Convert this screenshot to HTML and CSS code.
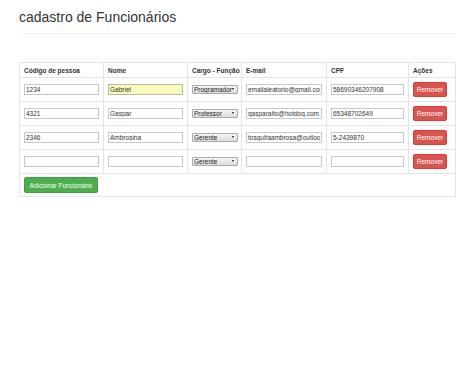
FILE: index.html
```html
<!DOCTYPE html>
<html lang="pt">

<head>
    <meta charset="UTF-8">
    <meta name="viewport" content="width=device-width, initial-scale=1.0">
    <title>cadastro de Funcionários</title>
    <link rel="stylesheet" href="styles.css">
</head>

<body>
    <div class="page">
        <h1 class="title">cadastro de Funcionários</h1>
        <hr class="rule">

        <table class="staff">
            <colgroup>
                <col class="c-code">
                <col class="c-name">
                <col class="c-role">
                <col class="c-mail">
                <col class="c-cpf">
                <col class="c-act">
            </colgroup>
            <thead>
                <tr>
                    <th>Código de pessoa</th>
                    <th>Nome</th>
                    <th>Cargo - Função</th>
                    <th>E-mail</th>
                    <th>CPF</th>
                    <th>Ações</th>
                </tr>
            </thead>
            <tbody>
                <tr>
                    <td><input class="field" type="text" value="1234"></td>
                    <td><input class="field filled" type="text" value="Gabriel"></td>
                    <td><span class="sel"><select><option>Programador</option><option>Professor</option><option>Gerente</option></select></span></td>
                    <td><input class="field" type="text" value="emailaleatorio@gmail.con"></td>
                    <td><input class="field" type="text" value="58690346207908"></td>
                    <td><button class="btn btn-red">Remover</button></td>
                </tr>
                <tr>
                    <td><input class="field" type="text" value="4321"></td>
                    <td><input class="field" type="text" value="Gaspar"></td>
                    <td><span class="sel"><select><option>Professor</option></select></span></td>
                    <td><input class="field" type="text" value="gasparalto@hotdog.com"></td>
                    <td><input class="field" type="text" value="65348702649"></td>
                    <td><button class="btn btn-red">Remover</button></td>
                </tr>
                <tr>
                    <td><input class="field" type="text" value="2346"></td>
                    <td><input class="field" type="text" value="Ambrosina"></td>
                    <td><span class="sel"><select><option>Gerente</option></select></span></td>
                    <td><input class="field" type="text" value="tosquitaambrosa@outlook.com"></td>
                    <td><input class="field" type="text" value="5-2439870"></td>
                    <td><button class="btn btn-red">Remover</button></td>
                </tr>
                <tr>
                    <td><input class="field" type="text" value=""></td>
                    <td><input class="field" type="text" value=""></td>
                    <td><span class="sel"><select><option>Gerente</option></select></span></td>
                    <td><input class="field" type="text" value=""></td>
                    <td><input class="field" type="text" value=""></td>
                    <td><button class="btn btn-red">Remover</button></td>
                </tr>
            </tbody>
            <tfoot>
                <tr>
                    <td colspan="6"><button class="btn btn-green">Adicionar Funcionário</button></td>
                </tr>
            </tfoot>
        </table>
    </div>
</body>

</html>
```

FILE: styles.css
```css
* {
    margin: 0;
    padding: 0;
    box-sizing: border-box;
}

body {
    font-family: "Liberation Sans", Arial, sans-serif;
    color: #333;
    background: #fff;
}

.page {
    padding: 9px 19px 0 19px;
}

.title {
    font-size: 14px;
    font-weight: normal;
    line-height: 16px;
    color: #333;
}

.rule {
    border: 0;
    border-top: 1px solid #eee;
    margin: 8px 0 28px 3px;
}

.staff {
    width: 436px;
    border-collapse: collapse;
    table-layout: fixed;
    font-size: 6.5px;
}

.c-code { width: 84px; }
.c-name { width: 84px; }
.c-role { width: 54px; }
.c-mail { width: 85px; }
.c-cpf { width: 82px; }
.c-act { width: 47px; }

.staff th,
.staff td {
    border: 1px solid #e4e4e4;
    padding: 0 4px;
    text-align: left;
    vertical-align: middle;
}

.staff th {
    height: 15px;
    font-weight: bold;
    color: #333;
    white-space: nowrap;
    overflow: visible;
}

.staff tbody td {
    height: 24px;
}

.staff tfoot td {
    height: 23px;
}

.field {
    display: block;
    width: 100%;
    height: 11px;
    border: 1px solid #c8c8c8;
    background: #fff;
    font-family: "Liberation Sans", Arial, sans-serif;
    font-size: 6.5px;
    color: #333;
    padding: 0 1px;
    outline: none;
}

.field.filled {
    background: #fafcbe;
    border-color: #b8b8a0;
}

.sel {
    position: relative;
    display: block;
    width: 46px;
}

.sel select {
    display: block;
    width: 100%;
    height: 9px;
    appearance: none;
    -webkit-appearance: none;
    border: 1px solid #aaa;
    border-radius: 1px;
    background: linear-gradient(#f6f6f6, #dcdcdc);
    font-family: "Liberation Sans", Arial, sans-serif;
    font-size: 6.5px;
    line-height: 7px;
    color: #222;
    padding: 0 1px;
}

.sel::after {
    content: "";
    position: absolute;
    right: 4px;
    top: 3px;
    border-left: 1.5px solid transparent;
    border-right: 1.5px solid transparent;
    border-top: 2.5px solid #111;
    pointer-events: none;
}

.btn {
    border: 0;
    border-radius: 2px;
    color: #fff;
    font-family: "Liberation Sans", Arial, sans-serif;
    font-size: 6.5px;
    height: 15px;
}

.btn-red {
    background: #d9534f;
    width: 34px;
    border: 1px solid #d43f3a;
}

.btn-green {
    background: #4cae4c;
    border: 1px solid #449d44;
    width: 74px;
    height: 16px;
}
```
